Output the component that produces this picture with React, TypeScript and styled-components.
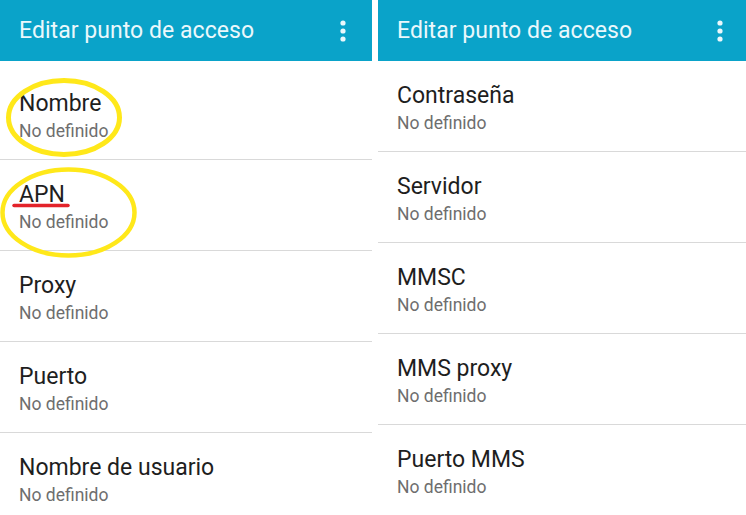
import { FC } from "react";
import styled, { createGlobalStyle } from "styled-components";

interface Field {
  label: string;
  value: string;
}

const leftFields: Field[] = [
  { label: "Nombre", value: "No definido" },
  { label: "APN", value: "No definido" },
  { label: "Proxy", value: "No definido" },
  { label: "Puerto", value: "No definido" },
  { label: "Nombre de usuario", value: "No definido" },
];

const rightFields: Field[] = [
  { label: "Contraseña", value: "No definido" },
  { label: "Servidor", value: "No definido" },
  { label: "MMSC", value: "No definido" },
  { label: "MMS proxy", value: "No definido" },
  { label: "Puerto MMS", value: "No definido" },
];

const MoreIcon: FC = () => (
  <svg width="6" height="22" viewBox="0 0 6 22">
    <circle cx="3" cy="3" r="2.6" fill="#eaf8fc" />
    <circle cx="3" cy="11" r="2.6" fill="#eaf8fc" />
    <circle cx="3" cy="19" r="2.6" fill="#eaf8fc" />
  </svg>
);

// hand-drawn marks on the first screenshot
const Annotations: FC = () => (
  <Overlay viewBox="0 0 372 515" width="372" height="515">
    <ellipse
      cx="64"
      cy="117.5"
      rx="55.5"
      ry="37"
      fill="none"
      stroke="#ffe81a"
      strokeWidth="5"
    />
    <ellipse
      cx="68.5"
      cy="212.5"
      rx="66"
      ry="43"
      fill="none"
      stroke="#ffe81a"
      strokeWidth="4.5"
    />
    <line
      x1="14"
      y1="205.5"
      x2="68"
      y2="205.5"
      stroke="#e3232a"
      strokeWidth="3.5"
      strokeLinecap="round"
    />
  </Overlay>
);

interface PanelProps {
  fields: Field[];
  width: number;
  offset: number;
  annotated?: boolean;
  menuGap: number;
}

const Panel: FC<PanelProps> = ({ fields, width, offset, annotated, menuGap }) => (
  <Screen $width={width}>
    <Header $menuGap={menuGap}>
      <Title>Editar punto de acceso</Title>
      <MoreIcon />
    </Header>
    <List $offset={offset}>
      {fields.map((field) => (
        <Row key={field.label}>
          <Label>{field.label}</Label>
          <Value>{field.value}</Value>
        </Row>
      ))}
    </List>
    {annotated && <Annotations />}
  </Screen>
);

export default function App() {
  return (
    <>
      <GlobalStyle />
      <Page>
        <Panel fields={leftFields} width={372} offset={8} annotated menuGap={26} />
        <Panel fields={rightFields} width={368} offset={0} menuGap={23} />
      </Page>
    </>
  );
}

const GlobalStyle = createGlobalStyle`
  html, body {
    margin: 0;
    padding: 0;
    background: #ffffff;
  }
  body {
    font-family: Roboto, "Noto Sans", "Liberation Sans", sans-serif;
  }
`;

const Page = styled.div`
  display: flex;
  justify-content: space-between;
  width: 746px;
  height: 515px;
  overflow: hidden;
  background: #ffffff;
`;

const Screen = styled.div<{ $width: number }>`
  position: relative;
  width: ${(p) => p.$width}px;
  flex-shrink: 0;
  display: flex;
  flex-direction: column;
  overflow: hidden;
`;

const Header = styled.div<{ $menuGap: number }>`
  height: 61px;
  flex-shrink: 0;
  display: flex;
  align-items: center;
  justify-content: space-between;
  padding: 0 ${(p) => p.$menuGap}px 0 19px;
  background: #0aa3c9;
`;

const Title = styled.div`
  color: #eaf8fc;
  font-size: 23px;
  letter-spacing: 0.05px;
`;

const List = styled.div<{ $offset: number }>`
  display: flex;
  flex-direction: column;
  padding-top: ${(p) => p.$offset}px;
`;

const Row = styled.div`
  height: 91px;
  flex-shrink: 0;
  box-sizing: border-box;
  padding: 21px 19px 0;
  border-bottom: 1px solid #d9d9d9;
`;

const Label = styled.div`
  color: #1e1e1e;
  font-size: 23px;
  line-height: 28px;
`;

const Value = styled.div`
  margin-top: 2px;
  color: #6e6e6e;
  font-size: 17.5px;
  line-height: 22px;
`;

const Overlay = styled.svg`
  position: absolute;
  top: 0;
  left: 0;
  pointer-events: none;
`;
